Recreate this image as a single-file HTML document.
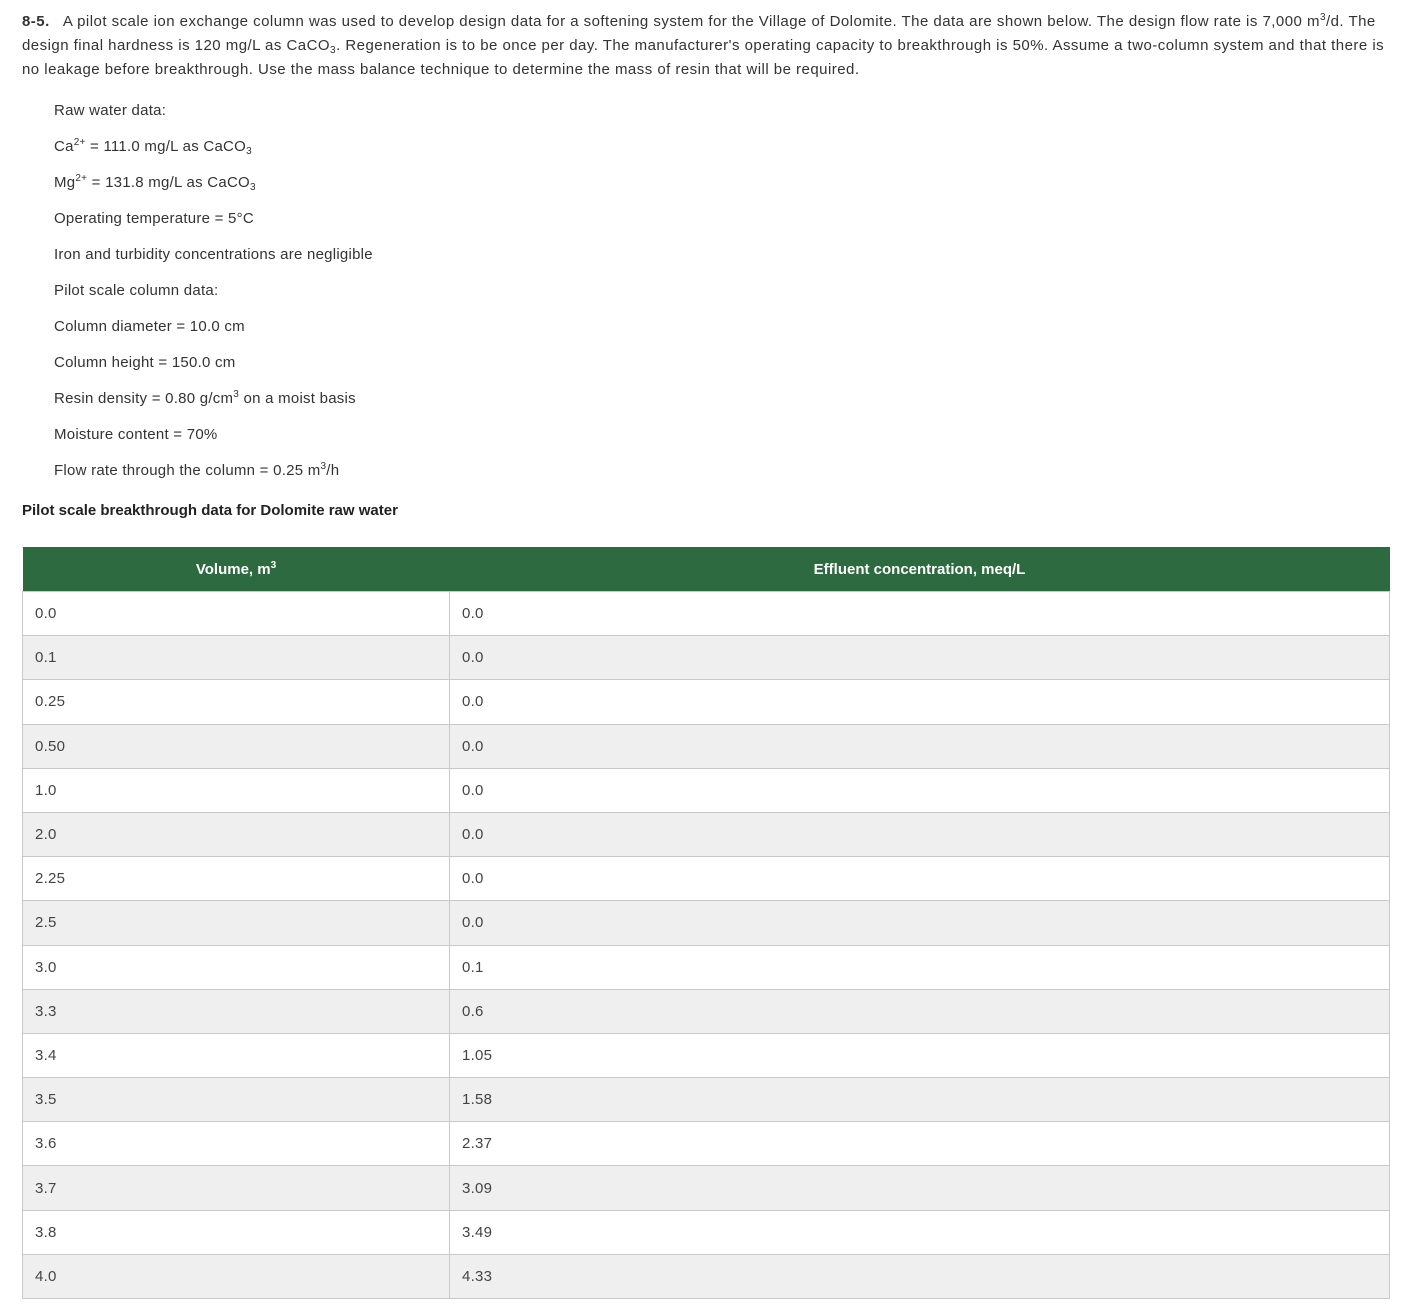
<!DOCTYPE html>
<html><head><meta charset="utf-8"><style>
body{margin:0;background:#fff;font-family:"Liberation Sans",Arial,sans-serif;color:#333;font-size:15px;letter-spacing:0.25px;}
.p{position:absolute;left:22px;top:10px;width:1390px;line-height:24px;color:#333;white-space:nowrap;letter-spacing:0.47px}
.l{position:absolute;left:54px;line-height:20px;}
sup{font-size:10px;line-height:0;vertical-align:6px}
sub{font-size:10px;line-height:0;vertical-align:-3px}
h4{position:absolute;left:22px;top:502px;margin:0;font-size:15px;font-weight:bold;color:#222;letter-spacing:0}
table{position:absolute;left:22px;top:547px;width:1368px;border-collapse:collapse;}
th{background:#2d6a3f;color:#fff;font-weight:bold;height:44px;font-size:15px;padding:0;letter-spacing:0}
td{border:1px solid #c8c8c8;height:43.2px;padding:0 0 0 12px;font-size:15px;color:#444}
tr:nth-child(odd) td{background:#efefef}
</style></head><body>
<div class="p"><b>8-5.</b>&nbsp;&nbsp; A pilot scale ion exchange column was used to develop design data for a softening system for the Village of Dolomite. The data are shown below. The design flow rate is 7,000 m<sup>3</sup>/d. The<br>design final hardness is 120 mg/L as CaCO<sub>3</sub>. Regeneration is to be once per day. The manufacturer's operating capacity to breakthrough is 50%. Assume a two-column system and that there is<br>no leakage before breakthrough. Use the mass balance technique to determine the mass of resin that will be required.</div>
<div class="l" style="top:101px">Raw water data:</div>
<div class="l" style="top:137px">Ca<sup>2+</sup> = 111.0 mg/L as CaCO<sub>3</sub></div>
<div class="l" style="top:173px">Mg<sup>2+</sup> = 131.8 mg/L as CaCO<sub>3</sub></div>
<div class="l" style="top:209px">Operating temperature = 5°C</div>
<div class="l" style="top:245px">Iron and turbidity concentrations are negligible</div>
<div class="l" style="top:281px">Pilot scale column data:</div>
<div class="l" style="top:317px">Column diameter = 10.0 cm</div>
<div class="l" style="top:353px">Column height = 150.0 cm</div>
<div class="l" style="top:389px">Resin density = 0.80 g/cm<sup>3</sup> on a moist basis</div>
<div class="l" style="top:425px">Moisture content = 70%</div>
<div class="l" style="top:461px">Flow rate through the column = 0.25 m<sup>3</sup>/h</div>
<h4>Pilot scale breakthrough data for Dolomite raw water</h4>
<table>
<tr><th style="width:427px">Volume, m<sup>3</sup></th><th>Effluent concentration, meq/L</th></tr>
<tr><td>0.0</td><td>0.0</td></tr>
<tr><td>0.1</td><td>0.0</td></tr>
<tr><td>0.25</td><td>0.0</td></tr>
<tr><td>0.50</td><td>0.0</td></tr>
<tr><td>1.0</td><td>0.0</td></tr>
<tr><td>2.0</td><td>0.0</td></tr>
<tr><td>2.25</td><td>0.0</td></tr>
<tr><td>2.5</td><td>0.0</td></tr>
<tr><td>3.0</td><td>0.1</td></tr>
<tr><td>3.3</td><td>0.6</td></tr>
<tr><td>3.4</td><td>1.05</td></tr>
<tr><td>3.5</td><td>1.58</td></tr>
<tr><td>3.6</td><td>2.37</td></tr>
<tr><td>3.7</td><td>3.09</td></tr>
<tr><td>3.8</td><td>3.49</td></tr>
<tr><td>4.0</td><td>4.33</td></tr>
</table>
</body></html>
